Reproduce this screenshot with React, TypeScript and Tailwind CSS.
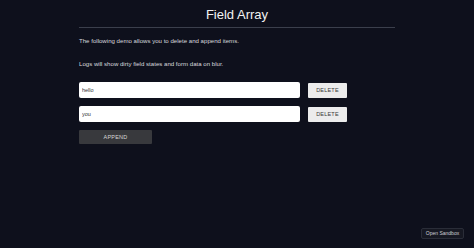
export default function App() {
  const fields = ["hello", "you"];

  return (
    <div
      className="relative min-h-[248px] w-full bg-[#0e101c] text-white"
      style={{ fontFamily: '"Liberation Sans", Arial, sans-serif' }}
    >
      <div className="mx-auto w-[316px] pt-[7px]">
        <h1 className="text-center text-[13px] leading-[16px] font-normal text-[#f2f2f2]">Field Array</h1>
        <div className="mt-[4px] h-px bg-[#3b3f4c]" />
        <p className="mt-[9px] text-[6.1px] leading-[8px] text-[#d8d9de]">
          The following demo allows you to delete and append items.
        </p>
        <p className="mt-[15px] text-[6.1px] leading-[8px] text-[#d8d9de]">
          Logs will show dirty field states and form data on blur.
        </p>

        <form className="mt-[14px] flex flex-col">
          {fields.map((value) => (
            <div key={value} className="mb-[8px] flex items-center">
              <input
                defaultValue={value}
                className="h-[16px] w-[221px] rounded-[2px] bg-white px-[3px] text-[5.5px] text-[#333] outline-none"
              />
              <button
                type="button"
                className="ml-[8px] h-[15px] w-[39px] rounded-[1px] bg-[#ececec] text-[5.5px] tracking-[0.2px] text-[#3a3a3a]"
              >
                DELETE
              </button>
            </div>
          ))}
          <button
            type="button"
            className="h-[14px] w-[73px] rounded-[1px] bg-[#38393d] text-[5.5px] tracking-[0.2px] text-[#d6d6d6]"
          >
            APPEND
          </button>
        </form>
      </div>

      <button
        type="button"
        className="absolute right-[10px] bottom-[9px] h-[11px] w-[43px] rounded-[2px] border border-[#2a2d38] bg-[#161822] text-[5px] text-[#cfd0d4]"
      >
        Open Sandbox
      </button>
    </div>
  );
}
